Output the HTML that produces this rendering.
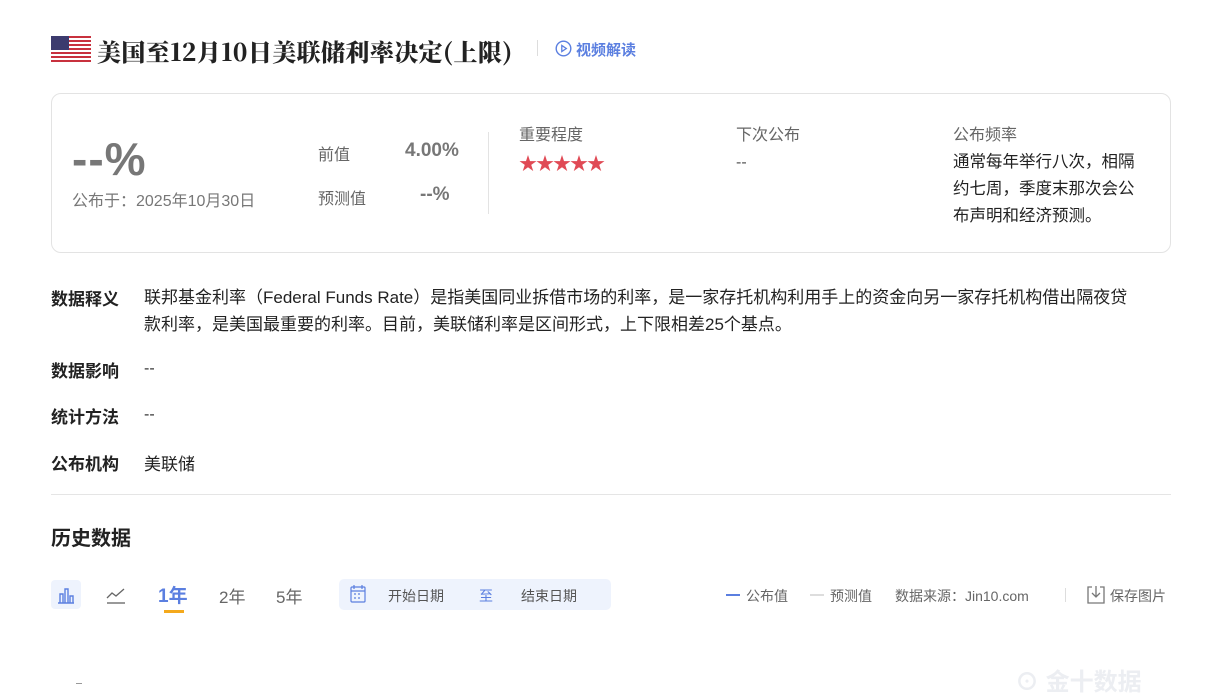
<!DOCTYPE html>
<html><head><meta charset="utf-8"><style>
*{margin:0;padding:0;box-sizing:border-box}
body{width:1225px;height:689px;overflow:hidden;background:#fff;font-family:"Liberation Sans","Noto Sans CJK SC",sans-serif;color:#333}
.card{position:absolute;left:0;top:0;width:1225px;height:689px;background:#fff}
.abs{position:absolute;white-space:nowrap}
.t{font-family:"Noto Serif CJK SC","Liberation Serif",serif;font-size:24px;font-weight:900;color:#222;letter-spacing:0.4px}
.box{position:absolute;left:51px;top:93px;width:1120px;height:160px;border:1px solid #e3e3e3;border-radius:10px}
.lab{font-size:16px;color:#666}
</style></head><body><div class="card">
<svg class="abs" style="left:51px;top:36px" width="40" height="26" viewBox="0 0 40 26"><rect width="40" height="26" fill="#fff"/><g fill="#c8313e"><rect y="0" width="40" height="2"/><rect y="4" width="40" height="2"/><rect y="8" width="40" height="2"/><rect y="12" width="40" height="2"/><rect y="16" width="40" height="2"/><rect y="20" width="40" height="2"/><rect y="24" width="40" height="2"/></g><rect width="18" height="14" fill="#3c3b6e"/></svg>
<div class="abs t" style="left:97px;top:33px">美国至12月10日美联储利率决定(上限)</div>
<div class="abs" style="left:537px;top:40px;width:1px;height:16px;background:#ddd"></div>
<svg class="abs" style="left:555px;top:40px" width="17" height="17" viewBox="0 0 17 17"><circle cx="8.5" cy="8.5" r="7.3" fill="none" stroke="#5b7fe0" stroke-width="1.4"/><path d="M6.8 5.5v6l4.5-3z" fill="none" stroke="#5b7fe0" stroke-width="1.3"/></svg>
<div class="abs" style="left:576px;top:39px;font-size:15px;font-weight:bold;color:#5b7fe0">视频解读</div>
<div class="box"></div>
<div class="abs" style="left:72px;top:132px;font-size:46px;font-weight:bold;color:#777;letter-spacing:1px">--%</div>
<div class="abs lab" style="left:72px;top:187px;color:#777">公布于：2025年10月30日</div>
<div class="abs lab" style="left:318px;top:141px">前值</div>
<div class="abs" style="left:405px;top:140px;font-size:19px;color:#777;font-weight:bold">4.00%</div>
<div class="abs lab" style="left:318px;top:185px">预测值</div>
<div class="abs" style="left:420px;top:184px;font-size:19px;color:#777;font-weight:bold">--%</div>
<div class="abs" style="left:488px;top:132px;width:1px;height:82px;background:#e3e3e3"></div>
<div class="abs lab" style="left:519px;top:121px">重要程度</div>
<div class="abs" style="left:519px;top:150px;font-size:18px;color:#e04a55;letter-spacing:-1px">★★★★★</div>
<div class="abs lab" style="left:736px;top:121px">下次公布</div>
<div class="abs" style="left:736px;top:154px;font-size:16px;color:#555">--</div>
<div class="abs lab" style="left:953px;top:121px">公布频率</div>
<div class="abs" style="left:953px;top:149px;font-size:16.5px;color:#222;line-height:27px;white-space:normal;width:196px">通常每年举行八次，相隔约七周，季度末那次会公布声明和经济预测。</div>
<div class="abs" style="left:51px;top:285px;font-size:17px;font-weight:bold;color:#222">数据释义</div>
<div class="abs" style="left:144px;top:284px;font-size:17px;color:#222;line-height:27px;white-space:normal;width:995px">联邦基金利率（Federal Funds Rate）是指美国同业拆借市场的利率，是一家存托机构利用手上的资金向另一家存托机构借出隔夜贷款利率，是美国最重要的利率。目前，美联储利率是区间形式，上下限相差25个基点。</div>
<div class="abs" style="left:51px;top:357px;font-size:17px;font-weight:bold;color:#222">数据影响</div><div class="abs" style="left:144px;top:360px;font-size:16px">--</div>
<div class="abs" style="left:51px;top:403px;font-size:17px;font-weight:bold;color:#222">统计方法</div><div class="abs" style="left:144px;top:406px;font-size:16px">--</div>
<div class="abs" style="left:51px;top:450px;font-size:17px;font-weight:bold;color:#222">公布机构</div><div class="abs" style="left:144px;top:450px;font-size:17px;color:#222">美联储</div>
<div class="abs" style="left:51px;top:494px;width:1120px;height:1px;background:#e5e5e5"></div>
<div class="abs" style="left:51px;top:522px;font-size:20px;font-weight:bold;color:#222">历史数据</div>
<div class="abs" style="left:51px;top:580px;width:30px;height:29px;background:#eef3fd;border-radius:4px"></div>
<svg class="abs" style="left:57px;top:585px" width="18" height="19" viewBox="0 0 18 19"><path d="M1 18h16M3 18V9h3v9M8 18V4h3v14M13 18V11h3v7" fill="none" stroke="#5b7fe0" stroke-width="1.4"/></svg>
<svg class="abs" style="left:106px;top:586px" width="20" height="19" viewBox="0 0 20 19"><path d="M1 12l5-5 4 3 8-7" fill="none" stroke="#666" stroke-width="1.3"/><path d="M1 17h18" stroke="#999" stroke-width="2"/></svg>
<div class="abs" style="left:158px;top:581px;font-size:19px;font-weight:bold;color:#5b7fe0">1年</div>
<div class="abs" style="left:164px;top:610px;width:20px;height:3px;background:#f4a91c"></div>
<div class="abs" style="left:219px;top:583px;font-size:17px;color:#666">2年</div>
<div class="abs" style="left:276px;top:583px;font-size:17px;color:#666">5年</div>
<div class="abs" style="left:339px;top:579px;width:272px;height:31px;background:#eef3fd;border-radius:5px"></div>
<svg class="abs" style="left:350px;top:585px" width="16" height="18" viewBox="0 0 16 18"><rect x="1" y="2" width="14" height="15" rx="1" fill="none" stroke="#5b7fe0" stroke-width="1.2"/><path d="M1 6h14M4 0v4M12 0v4M4 9h2M8 9h2M4 13h2M8 13h2" stroke="#5b7fe0" stroke-width="1.2"/></svg>
<div class="abs" style="left:388px;top:586px;font-size:14px;color:#555">开始日期</div>
<div class="abs" style="left:479px;top:586px;font-size:14px;color:#5b7fe0">至</div>
<div class="abs" style="left:521px;top:586px;font-size:14px;color:#555">结束日期</div>
<div class="abs" style="left:726px;top:594px;width:14px;height:2px;background:#5b7fe0"></div>
<div class="abs" style="left:746px;top:586px;font-size:14px;color:#666">公布值</div>
<div class="abs" style="left:810px;top:594px;width:14px;height:2px;background:#ddd"></div>
<div class="abs" style="left:830px;top:586px;font-size:14px;color:#666">预测值</div>
<div class="abs" style="left:895px;top:586px;font-size:14px;color:#666">数据来源：Jin10.com</div>
<div class="abs" style="left:1065px;top:588px;width:1px;height:14px;background:#ddd"></div>
<svg class="abs" style="left:1087px;top:585px" width="18" height="19" viewBox="0 0 18 19"><path d="M5 2H1v16h16V2h-4M9 1v11M5 8l4 4 4-4" fill="none" stroke="#777" stroke-width="1.3"/></svg>
<div class="abs" style="left:1110px;top:586px;font-size:14px;color:#666">保存图片</div>
<div class="abs" style="left:1015px;top:662px;font-size:24px;font-weight:bold;color:#eceef2">⊙ 金十数据</div>
<div class="abs" style="left:76px;top:683px;width:6px;height:1px;background:#999"></div>
</div></body></html>
